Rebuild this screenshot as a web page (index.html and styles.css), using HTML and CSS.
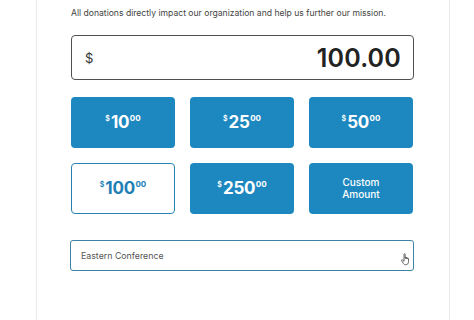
FILE: index.html
```html
<!DOCTYPE html>
<html>
<head>
<meta charset="utf-8">
<link rel="stylesheet" href="styles.css">
</head>
<body>
<div class="card">
  <p class="desc">All donations directly impact our organization and help us further our mission.</p>
  <div class="amount">
    <span class="cur">$</span>
    <span class="val">100.00</span>
  </div>
  <div class="grid">
    <div class="btn"><span class="sym">$</span><span class="big">10</span><span class="cents">00</span></div>
    <div class="btn"><span class="sym">$</span><span class="big">25</span><span class="cents">00</span></div>
    <div class="btn"><span class="sym">$</span><span class="big">50</span><span class="cents">00</span></div>
    <div class="btn selected"><span class="sym">$</span><span class="big">100</span><span class="cents">00</span></div>
    <div class="btn"><span class="sym">$</span><span class="big">250</span><span class="cents">00</span></div>
    <div class="btn custom">Custom<br>Amount</div>
  </div>
  <div class="select">
    <span>Eastern Conference</span>
    <svg class="cursor" width="10" height="13" viewBox="0 0 10 13">
      <path d="M3 1.2 C3 0.5 4.2 0.5 4.2 1.2 L4.2 5.5 L4.2 4.6 C4.2 4 5.3 4 5.3 4.6 L5.3 5.6 L5.3 5 C5.3 4.4 6.4 4.4 6.4 5 L6.4 6 L6.4 5.5 C6.4 5 7.5 5 7.5 5.5 L7.5 8.6 C7.5 10.4 6.5 11.8 4.8 11.8 C3.5 11.8 2.8 11.2 2.2 10.2 L0.6 7.6 C0.2 7 1 6.4 1.5 6.9 L3 8.3 Z" fill="#fff" stroke="#444" stroke-width="0.8" stroke-linejoin="round"/>
    </svg>
  </div>
</div>
</body>
</html>
```

FILE: styles.css
```css
* { box-sizing: border-box; }
html, body { margin: 0; padding: 0; background: #fff; }
body { font-family: Inter, "Noto Sans", sans-serif; }
.card {
  margin-left: 36px;
  width: 414px;
  min-height: 320px;
  border-left: 1px solid #ebebeb;
  border-right: 1px solid #ebebeb;
  padding: 6px 35px 0 34px;
}
.desc {
  margin: 0;
  font-size: 8.6px;
  line-height: 14px;
  color: #444;
  white-space: nowrap;
}
.amount {
  margin-top: 15px;
  height: 45px;
  border: 1.5px solid #505050;
  border-radius: 4px;
  display: flex;
  align-items: center;
  justify-content: space-between;
  padding: 0 12px 0 13px;
}
.cur { font-size: 13px; color: #333; }
.val { font-size: 25px; font-weight: 600; color: #222; letter-spacing: 0.2px; }
.grid {
  margin-top: 17px;
  display: grid;
  grid-template-columns: repeat(3, 104px);
  grid-auto-rows: 51px;
  column-gap: 15px;
  row-gap: 15px;
}
.btn {
  background: #1d88bf;
  border-radius: 4px;
  color: #fff;
  display: flex;
  align-items: flex-start;
  justify-content: center;
  padding-top: 16px;
  font-weight: 700;
}
.btn.selected {
  background: #fff;
  border: 1.2px solid #2a82b4;
  color: #2280b6;
  padding-top: 15px;
}
.sym { font-size: 7px; line-height: 8px; margin-top: 2px; margin-right: 1px; font-weight: 600; }
.big { font-size: 17px; line-height: 19px; letter-spacing: -0.2px; }
.cents { font-size: 8px; line-height: 9px; margin-left: 0.5px; margin-top: 1px; }
.btn.custom {
  font-weight: 500;
  font-size: 10px;
  line-height: 11.5px;
  text-align: center;
  padding-top: 14px;
}
.select {
  margin-top: 26px;
  margin-left: -1px;
  height: 31px;
  border: 1.5px solid #3b82a4;
  border-radius: 3px;
  display: flex;
  align-items: center;
  justify-content: space-between;
  padding: 0 2px 0 10px;
  font-size: 8.8px;
  color: #555;
}
.cursor { margin-top: 8px; }
```
